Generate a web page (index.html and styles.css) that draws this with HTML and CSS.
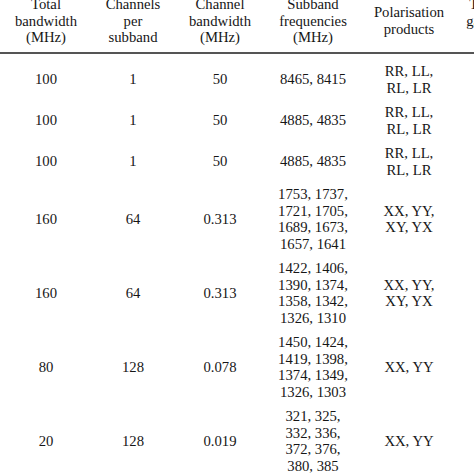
FILE: index.html
```html
<!DOCTYPE html>
<html>
<head>
<meta charset="utf-8">
<link rel="stylesheet" href="styles.css">
</head>
<body>
<table class="spec">
  <colgroup>
    <col class="c1"><col class="c2"><col class="c3"><col class="c4"><col class="c5"><col class="c6">
  </colgroup>
  <thead>
    <tr>
      <th>Total<br>bandwidth<br>(MHz)</th>
      <th>Channels<br>per<br>subband</th>
      <th>Channel<br>bandwidth<br>(MHz)</th>
      <th>Subband<br>frequencies<br>(MHz)</th>
      <th>Polarisation<br>products</th>
      <th>Time<br>gating<br>(s)</th>
    </tr>
  </thead>
  <tbody>
    <tr class="first">
      <td>100</td><td>1</td><td>50</td><td>8465, 8415</td><td>RR, LL,<br>RL, LR</td><td></td>
    </tr>
    <tr>
      <td>100</td><td>1</td><td>50</td><td>4885, 4835</td><td>RR, LL,<br>RL, LR</td><td></td>
    </tr>
    <tr>
      <td>100</td><td>1</td><td>50</td><td>4885, 4835</td><td>RR, LL,<br>RL, LR</td><td></td>
    </tr>
    <tr>
      <td>160</td><td>64</td><td>0.313</td><td>1753, 1737,<br>1721, 1705,<br>1689, 1673,<br>1657, 1641</td><td>XX, YY,<br>XY, YX</td><td></td>
    </tr>
    <tr>
      <td>160</td><td>64</td><td>0.313</td><td>1422, 1406,<br>1390, 1374,<br>1358, 1342,<br>1326, 1310</td><td>XX, YY,<br>XY, YX</td><td></td>
    </tr>
    <tr>
      <td>80</td><td>128</td><td>0.078</td><td>1450, 1424,<br>1419, 1398,<br>1374, 1349,<br>1326, 1303</td><td>XX, YY</td><td></td>
    </tr>
    <tr>
      <td>20</td><td>128</td><td>0.019</td><td>321, 325,<br>332, 336,<br>372, 376,<br>380, 385</td><td>XX, YY</td><td></td>
    </tr>
  </tbody>
</table>
</body>
</html>
```

FILE: styles.css
```css
html, body {
  margin: 0;
  padding: 0;
  background: #ffffff;
  overflow: hidden;
}

body {
  font-family: "Liberation Serif", "Times New Roman", serif;
  font-size: 14.7px;
  line-height: 16.5px;
  color: #161616;
}

.spec {
  border-collapse: separate;
  border-spacing: 0;
  table-layout: fixed;
  width: 511px;
  margin-top: -4px;
}

.c1 { width: 92px; }
.c2 { width: 82px; }
.c3 { width: 92px; }
.c4 { width: 94px; }
.c5 { width: 98px; }
.c6 { width: 53px; }

.spec th,
.spec td {
  text-align: center;
  vertical-align: middle;
  white-space: nowrap;
  font-weight: normal;
  padding: 4px 0;
}

.spec th {
  padding: 0 0 6.5px;
  border-bottom: 2px solid #555555;
}

.spec tr.first td {
  padding-top: 9px;
}
```
